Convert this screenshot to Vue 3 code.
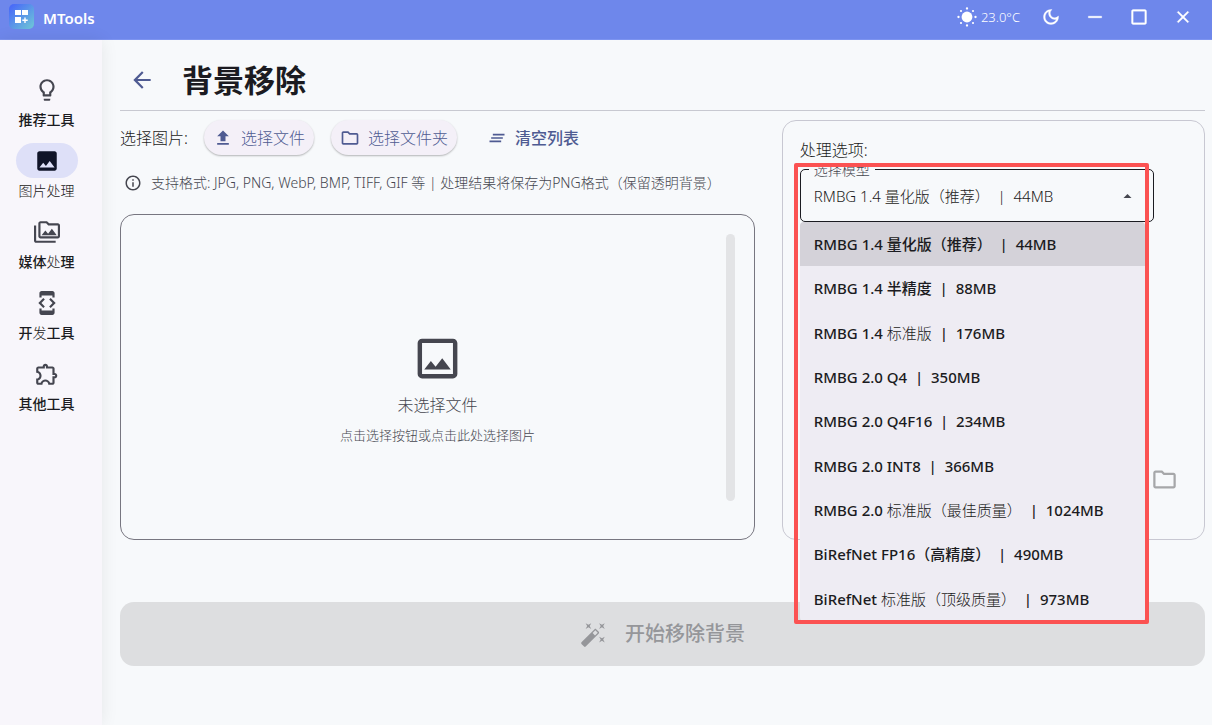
<script setup>
import { ref } from 'vue'

const icons = {
  bulb: 'M9 21c0 .55.45 1 1 1h4c.55 0 1-.45 1-1v-1H9v1zm3-19C8.14 2 5 5.14 5 9c0 2.38 1.19 4.47 3 5.74V17c0 .55.45 1 1 1h6c.55 0 1-.45 1-1v-2.26c1.81-1.27 3-3.36 3-5.74 0-3.86-3.14-7-7-7zm2.85 11.1l-.85.6V16h-4v-2.3l-.85-.6A4.997 4.997 0 0 1 7 9c0-2.76 2.24-5 5-5s5 2.24 5 5c0 1.63-.8 3.16-2.15 4.1z',
  image: 'M21 19V5c0-1.1-.9-2-2-2H5c-1.1 0-2 .9-2 2v14c0 1.1.9 2 2 2h14c1.1 0 2-.9 2-2zM8.5 13.5l2.5 3.01L14.5 12l4.5 6H5l3.5-4.5z',
  imageOutline: 'M19 5v14H5V5h14m0-2H5c-1.1 0-2 .9-2 2v14c0 1.1.9 2 2 2h14c1.1 0 2-.9 2-2V5c0-1.1-.9-2-2-2zm-4.86 8.86l-3 3.87L9 13.14 6 17h12l-3.86-5.14z',
  media: 'M2 6H0v5h.01L0 20c0 1.1.9 2 2 2h18v-2H2V6zm20-2h-8l-2-2H6c-1.1 0-1.99.9-1.99 2L4 16c0 1.1.9 2 2 2h16c1.1 0 2-.9 2-2V6c0-1.1-.9-2-2-2zm0 12H6V4h5.17l2 2H22v10zM7 15h14l-4.5-6-3.5 4.51-2.5-3.01z',
  dev: 'M7 5h10v2h2V3c0-1.1-.9-1.99-2-1.99L7 1c-1.1 0-2 .9-2 2v4h2V5zm8.41 11.59L20 12l-4.59-4.59L14 8.83 17.17 12 14 15.17l1.41 1.42zM10 15.17L6.83 12 10 8.83 8.59 7.41 4 12l4.59 4.59L10 15.17zM17 19H7v-2H5v4c0 1.1.9 2 2 2h10c1.1 0 2-.9 2-2v-4h-2v2z',
  puzzle: 'M10.5 4.5c.28 0 .5.22.5.5v2h6v6h2c.28 0 .5.22.5.5s-.22.5-.5.5h-2v6h-2.12c-.68-1.75-2.39-3-4.38-3s-3.7 1.25-4.38 3H4v-2.12c1.75-.68 3-2.39 3-4.38 0-1.99-1.24-3.7-2.99-4.38L4 7h6V5c0-.28.22-.5.5-.5m0-2C9.12 2.5 8 3.62 8 5H4c-1.1 0-1.99.9-1.99 2v3.8h.29c1.49 0 2.7 1.21 2.7 2.7s-1.21 2.7-2.7 2.7H2V20c0 1.1.9 2 2 2h3.8v-.3c0-1.49 1.21-2.7 2.7-2.7s2.7 1.21 2.7 2.7v.3H17c1.1 0 2-.9 2-2v-4c1.38 0 2.5-1.12 2.5-2.5S20.38 11 19 11V7c0-1.1-.9-2-2-2h-4c0-1.38-1.12-2.5-2.5-2.5z',
  back: 'M20 11H7.83l5.59-5.59L12 4l-8 8 8 8 1.41-1.41L7.83 13H20v-2z',
  upload: 'M5 20h14v-2H5v2zm0-10h4v6h6v-6h4l-7-7-7 7z',
  folder: 'M9.17 6l2 2H20v10H4V6h5.17M10 4H4c-1.1 0-1.99.9-1.99 2L2 18c0 1.1.9 2 2 2h16c1.1 0 2-.9 2-2V8c0-1.1-.9-2-2-2h-8l-2-2z',
  clear: 'M5 13h14v-2H5v2zm-2 4h14v-2H3v2zM7 7v2h14V7H7z',
  info: 'M11 7h2v2h-2zm0 4h2v6h-2zm1-9C6.48 2 2 6.48 2 12s4.48 10 10 10 10-4.48 10-10S17.52 2 12 2zm0 18c-4.41 0-8-3.59-8-8s3.59-8 8-8 8 3.59 8 8-3.59 8-8 8z',
  wand: 'M7.5 5.6L10 7 8.6 4.5 10 2 7.5 3.4 5 2l1.4 2.5L5 7zm12 9.8L17 14l1.4 2.5L17 19l2.5-1.4L22 19l-1.4-2.5L22 14zM22 2l-2.5 1.4L17 2l1.4 2.5L17 7l2.5-1.4L22 7l-1.4-2.5zm-7.63 5.29c-.39-.39-1.02-.39-1.41 0L1.29 18.96c-.39.39-.39 1.02 0 1.41l2.34 2.34c.39.39 1.02.39 1.41 0L16.7 11.05c.39-.39.39-1.02 0-1.41l-2.33-2.35zm-1.03 5.49l-2.12-2.12 2.44-2.44 2.12 2.12-2.44 2.44z',
  moon: 'M9.37 5.51C9.19 6.15 9.1 6.82 9.1 7.5c0 4.08 3.32 7.4 7.4 7.4.68 0 1.35-.09 1.99-.27C17.45 17.19 14.93 19 12 19c-3.86 0-7-3.14-7-7 0-2.93 1.81-5.45 4.37-6.49zM12 3c-4.97 0-9 4.03-9 9s4.03 9 9 9 9-4.03 9-9c0-.46-.04-.92-.1-1.36-.98 1.37-2.58 2.26-4.4 2.26-2.98 0-5.4-2.42-5.4-5.4 0-1.81.89-3.42 2.26-4.4-.44-.06-.9-.1-1.36-.1z',
  minimize: 'M4 11h16v2H4z',
  maximize: 'M19 3H5c-1.1 0-2 .9-2 2v14c0 1.1.9 2 2 2h14c1.1 0 2-.9 2-2V5c0-1.1-.9-2-2-2zm0 16H5V5h14v14z',
  close: 'M19 6.41L17.59 5 12 10.59 6.41 5 5 6.41 10.59 12 5 17.59 6.41 19 12 13.41 17.59 19 19 17.59 13.41 12z',
}

const windowButtons = [
  { name: '深色模式', icon: icons.moon },
  { name: '最小化', icon: icons.minimize },
  { name: '最大化', icon: icons.maximize },
  { name: '关闭', icon: icons.close },
]

const navItems = [
  { icon: icons.bulb, label: [['推荐工具']] },
  { icon: icons.image, label: [['图片处理', 'thin']], active: true },
  { icon: icons.media, label: [['媒体'], ['处', 'thin'], ['理']] },
  { icon: icons.dev, label: [['开'], ['发', 'thin'], ['工具']] },
  { icon: icons.puzzle, label: [['其他工具']] },
]

const bar = '\u00a0\u00a0|\u00a0\u00a0'
const models = [
  [['RMBG 1.4 量化版（推荐）' + bar + '44MB']],
  [['RMBG 1.4 半精度' + bar + '88MB']],
  [['RMBG 1.4 '], ['标准版', 'thin'], [bar + '176MB']],
  [['RMBG 2.0 Q4' + bar + '350MB']],
  [['RMBG 2.0 Q4F16' + bar + '234MB']],
  [['RMBG 2.0 INT8' + bar + '366MB']],
  [['RMBG 2.0 '], ['标准版', 'thin'], ['（', 'thin', 'zh-TW'], ['最佳质量', 'thin'], ['）', 'thin', 'zh-TW'], [bar + '1024MB']],
  [['BiRefNet FP16（高精度）' + bar + '490MB']],
  [['BiRefNet '], ['标准版', 'thin'], ['（', 'thin', 'zh-TW'], ['顶级质量', 'thin'], ['）', 'thin', 'zh-TW'], [bar + '973MB']],
]
const plain = (parts) => parts.map((p) => p[0]).join('')
const selected = ref(0)
</script>

<template>
  <div class="app">
    <header class="titlebar">
      <svg class="logo" viewBox="0 0 25 25" aria-hidden="true">
        <defs>
          <linearGradient id="logo-fill" x1="0" y1="0" x2="1" y2="1">
            <stop offset="0.1" stop-color="#4a6cf7" />
            <stop offset="1" stop-color="#6fc9d6" />
          </linearGradient>
        </defs>
        <rect width="25" height="25" rx="5" fill="url(#logo-fill)" />
        <path fill="#fff" d="M6 6h6v5H6zM13 6h6v5h-6zM6 13h6v6H6zM15.300 13.500h1.400v2h2v1.400h-2v2h-1.400v-2h-2v-1.400h2z" />
      </svg>
      <span class="app-name">MTools</span>
      <div class="weather">
        <svg class="sun" viewBox="0 0 24 24" aria-hidden="true">
          <circle cx="12" cy="12" r="6.500" fill="#fff" />
          <g fill="#fff">
            <circle cx="12" cy="1.800" r="1.400" /><circle cx="12" cy="22.200" r="1.400" />
            <circle cx="1.800" cy="12" r="1.400" /><circle cx="22.200" cy="12" r="1.400" />
            <circle cx="4.800" cy="4.800" r="1.300" /><circle cx="19.200" cy="4.800" r="1.300" />
            <circle cx="4.800" cy="19.200" r="1.300" /><circle cx="19.200" cy="19.200" r="1.300" />
          </g>
        </svg>
        <span>23.0°C</span>
      </div>
      <button v-for="b in windowButtons" :key="b.name" class="win-btn" type="button" :aria-label="b.name">
        <svg viewBox="0 0 24 24"><path :d="b.icon" /></svg>
      </button>
    </header>

    <div class="body">
      <nav class="sidebar">
        <button v-for="(n, i) in navItems" :key="i" class="nav-item" :class="{ active: n.active }" type="button">
          <span class="pill"><svg viewBox="0 0 24 24"><path :d="n.icon" /></svg></span>
          <span class="nav-label"><span v-for="(p, j) in n.label" :key="j" :class="p[1]">{{ p[0] }}</span></span>
        </button>
      </nav>

      <main class="main">
        <div class="page-head">
          <button class="back" type="button" aria-label="返回">
            <svg viewBox="0 0 24 24"><path :d="icons.back" /></svg>
          </button>
          <h1>背景移除</h1>
        </div>

        <div class="workspace">
          <section class="files">
            <div class="pick-row">
              <span class="pick-label">选择图片:</span>
              <button class="chip" type="button">
                <svg viewBox="0 0 24 24"><path :d="icons.upload" /></svg>选择文件
              </button>
              <button class="chip" type="button">
                <svg viewBox="0 0 24 24"><path :d="icons.folder" /></svg>选择文件夹
              </button>
              <button class="clear" type="button">
                <svg viewBox="0 0 24 24"><path :d="icons.clear" /></svg>清空列表
              </button>
            </div>
            <p class="hint">
              <svg viewBox="0 0 24 24"><path :d="icons.info" /></svg>
              <span>支持格式: JPG, PNG, WebP, BMP, TIFF, GIF 等 | 处理结果将保存为PNG格式（保留透明背景）</span>
            </p>
            <button class="dropzone" type="button">
              <svg viewBox="0 0 24 24"><path :d="icons.imageOutline" /></svg>
              <span class="empty-title">未选择文件</span>
              <span class="empty-sub">点击选择按钮或点击此处选择图片</span>
              <span class="scroll-thumb"></span>
            </button>
          </section>

          <section class="options">
            <h2>处理选项:</h2>
            <div class="field">
              <select id="model" v-model="selected">
                <option v-for="(m, i) in models" :key="i" :value="i">{{ plain(m) }}</option>
              </select>
              <label for="model">选择模型</label>
              <svg class="caret" viewBox="0 0 10 5" aria-hidden="true"><path d="M0 5l5-5 5 5z" /></svg>
              <ul class="menu" role="listbox" aria-label="选择模型">
                <li
                  v-for="(m, i) in models"
                  :key="i"
                  role="option"
                  :aria-selected="i === selected"
                  :class="{ current: i === selected }"
                  @click="selected = i"
                ><span><span v-for="(p, j) in m" :key="j" :class="p[1]" :lang="p[2]">{{ p[0] }}</span></span></li>
              </ul>
              <div class="highlight"></div>
            </div>
            <button class="browse" type="button" aria-label="浏览输出目录" disabled>
              <svg viewBox="0 0 24 24"><path :d="icons.folder" /></svg>
            </button>
          </section>
        </div>

        <button class="start" type="button" disabled>
          <svg viewBox="0 0 24 24"><path :d="icons.wand" /></svg>开始移除背景
        </button>
      </main>
    </div>
  </div>
</template>

<style>
body {
  background: #f7f9fb;
}
</style>

<style scoped>
.app {
  min-height: 100vh;
  display: flex;
  flex-direction: column;
  background: #f7f9fb;
  color: #1b1b21;
  font-family: "Noto Sans", "Noto Sans CJK SC", sans-serif;
  font-size: 15px;
  line-height: 20px;
}
* {
  box-sizing: border-box;
}
button {
  font: inherit;
  color: inherit;
  background: none;
  border: 0;
  padding: 0;
}
svg {
  display: block;
  flex: none;
  fill: currentColor;
}
.thin {
  font-weight: 300;
}
.thin:lang(zh-TW) {
  font-family: "Noto Sans CJK TC", sans-serif;
}

.titlebar {
  height: 40px;
  padding: 0 7px 6px 9px;
  display: flex;
  align-items: center;
  background: #6e87eb;
  border-bottom: 1px solid #7d94f0;
  color: #fff;
}
.logo {
  width: 25px;
  height: 25px;
}
.app-name {
  margin: 2px auto 0 9px;
  font-weight: 600;
}
.weather {
  display: flex;
  align-items: center;
  gap: 4px;
  margin-right: 9px;
  font-size: 13px;
  font-weight: 300;
}
.sun {
  width: 20px;
  height: 20px;
}
.win-btn {
  width: 44px;
  height: 32px;
  display: grid;
  place-items: center;
}
.win-btn svg {
  width: 20px;
  height: 20px;
  stroke: currentColor;
  stroke-width: 0.4;
}

.body {
  flex: 1;
  display: flex;
}
.sidebar {
  flex: none;
  width: 102px;
  padding: 32px 9px 0 0;
  display: flex;
  flex-direction: column;
  align-items: center;
  gap: 15px;
  background: #f8f6fb;
  box-shadow: 0 0 16px rgba(0, 0, 0, 0.08);
}
.nav-item {
  display: flex;
  flex-direction: column;
  align-items: center;
  gap: 5px;
}
.pill {
  width: 62px;
  height: 35px;
  display: grid;
  place-items: center;
  border-radius: 18px;
  color: #454650;
}
.active .pill {
  background: #dee0f8;
  color: #101428;
}
.pill svg {
  width: 26px;
  height: 26px;
}
.nav-label {
  font-size: 14px;
  line-height: 16px;
  font-weight: 500;
}

.main {
  flex: 1;
  min-width: 0;
  padding: 0 7px 24px 18px;
}
.page-head {
  height: 71px;
  padding: 9px 0 0 9px;
  display: flex;
  align-items: flex-start;
  border-bottom: 1px solid #c8c9d1;
}
.back {
  width: 26px;
  height: 62px;
  display: grid;
  place-items: center;
  color: #4f5b92;
}
.back svg {
  width: 26px;
  height: 26px;
}
h1 {
  margin: 0 0 0 27px;
  font-size: 31px;
  line-height: 62px;
  font-weight: 600;
}

.workspace {
  margin-top: 9px;
  display: grid;
  grid-template-columns: 3fr 2fr;
  gap: 27px;
}
.files {
  display: flex;
  flex-direction: column;
  min-width: 0;
}
.pick-row {
  display: flex;
  align-items: center;
  height: 35px;
  font-size: 16px;
}
.pick-label {
  margin-right: 16px;
  font-weight: 300;
}
.chip {
  display: flex;
  align-items: center;
  gap: 8px;
  height: 35px;
  margin-right: 17px;
  padding: 0 9px;
  border-radius: 18px;
  background: #f4f0f8;
  box-shadow: 0 1px 2px rgba(0, 0, 0, 0.28);
  color: #4f5b92;
  font-weight: 300;
}
.chip svg,
.clear svg {
  width: 20px;
  height: 20px;
}
.clear {
  display: flex;
  align-items: center;
  gap: 8px;
  margin-left: 13px;
  color: #4f5b92;
  font-weight: 500;
}
.hint {
  display: flex;
  align-items: center;
  gap: 9px;
  margin: 18px 0 21px;
  padding-left: 4px;
  color: #45464f;
  font-size: 14px;
  font-weight: 300;
}
.hint svg {
  width: 18px;
  height: 18px;
}
.dropzone {
  position: relative;
  flex: 1;
  display: flex;
  flex-direction: column;
  align-items: center;
  justify-content: center;
  padding-top: 22px;
  border: 1px solid #777680;
  border-radius: 14px;
  color: #45464f;
}
.dropzone svg {
  width: 53px;
  height: 53px;
}
.empty-title {
  margin-top: 10px;
  font-size: 16px;
  font-weight: 300;
}
.empty-sub {
  margin-top: 10px;
  font-size: 13px;
  font-weight: 300;
}
.scroll-thumb {
  position: absolute;
  top: 19px;
  right: 19px;
  bottom: 38px;
  width: 9px;
  border-radius: 5px;
  background: #e3e4e6;
}

.options {
  min-height: 420px;
  display: flex;
  flex-direction: column;
  padding: 19px 18px 38px 17px;
  border: 1px solid #c8c8d2;
  border-radius: 14px;
}
h2 {
  margin: 0;
  font-size: 16px;
  line-height: 20px;
  font-weight: 300;
}
.field {
  position: relative;
  margin: 9px 32px 0 0;
}
select {
  display: block;
  appearance: none;
  width: 100%;
  height: 53px;
  padding: 0 40px 0 13px;
  border: 1px solid #1b1b21;
  border-radius: 5px;
  background: #f7f9fb;
  color: #1b1b21;
  font-family: inherit;
  font-size: 15px;
  font-weight: 300;
  opacity: 1;
}
label {
  position: absolute;
  top: -7px;
  left: 9px;
  padding: 0 5px;
  background: #f7f9fb;
  color: #45464f;
  font-size: 14px;
  line-height: 16px;
  font-weight: 300;
}
.caret {
  position: absolute;
  top: 25px;
  right: 22px;
  width: 9px;
  height: 4px;
  color: #45464f;
}
.menu {
  position: absolute;
  top: 53px;
  left: 0;
  right: 9px;
  height: 399px;
  display: grid;
  grid-auto-rows: 1fr;
  margin: 0;
  padding: 0;
  list-style: none;
  border-radius: 4px;
  overflow: hidden;
  background: #eeecf3;
  font-weight: 500;
  white-space: nowrap;
}
.menu li {
  display: flex;
  align-items: center;
  padding: 0 14px;
}
.menu .current {
  background: #d4d2d9;
}
.highlight {
  position: absolute;
  top: -6px;
  left: -6px;
  right: 5px;
  height: 461px;
  border: 4px solid #fb5252;
  border-radius: 2px;
  pointer-events: none;
}
.browse {
  align-self: flex-end;
  width: 44px;
  height: 44px;
  margin-top: auto;
  display: grid;
  place-items: center;
  color: #a6a7a9;
}
.browse svg {
  width: 27px;
  height: 27px;
}

.start {
  width: 100%;
  height: 64px;
  margin-top: 62px;
  display: flex;
  align-items: center;
  justify-content: center;
  gap: 18px;
  border-radius: 14px;
  background: #dddee0;
  color: #95969a;
  font-size: 20px;
  font-weight: 500;
}
.start svg {
  width: 27px;
  height: 27px;
}
</style>
